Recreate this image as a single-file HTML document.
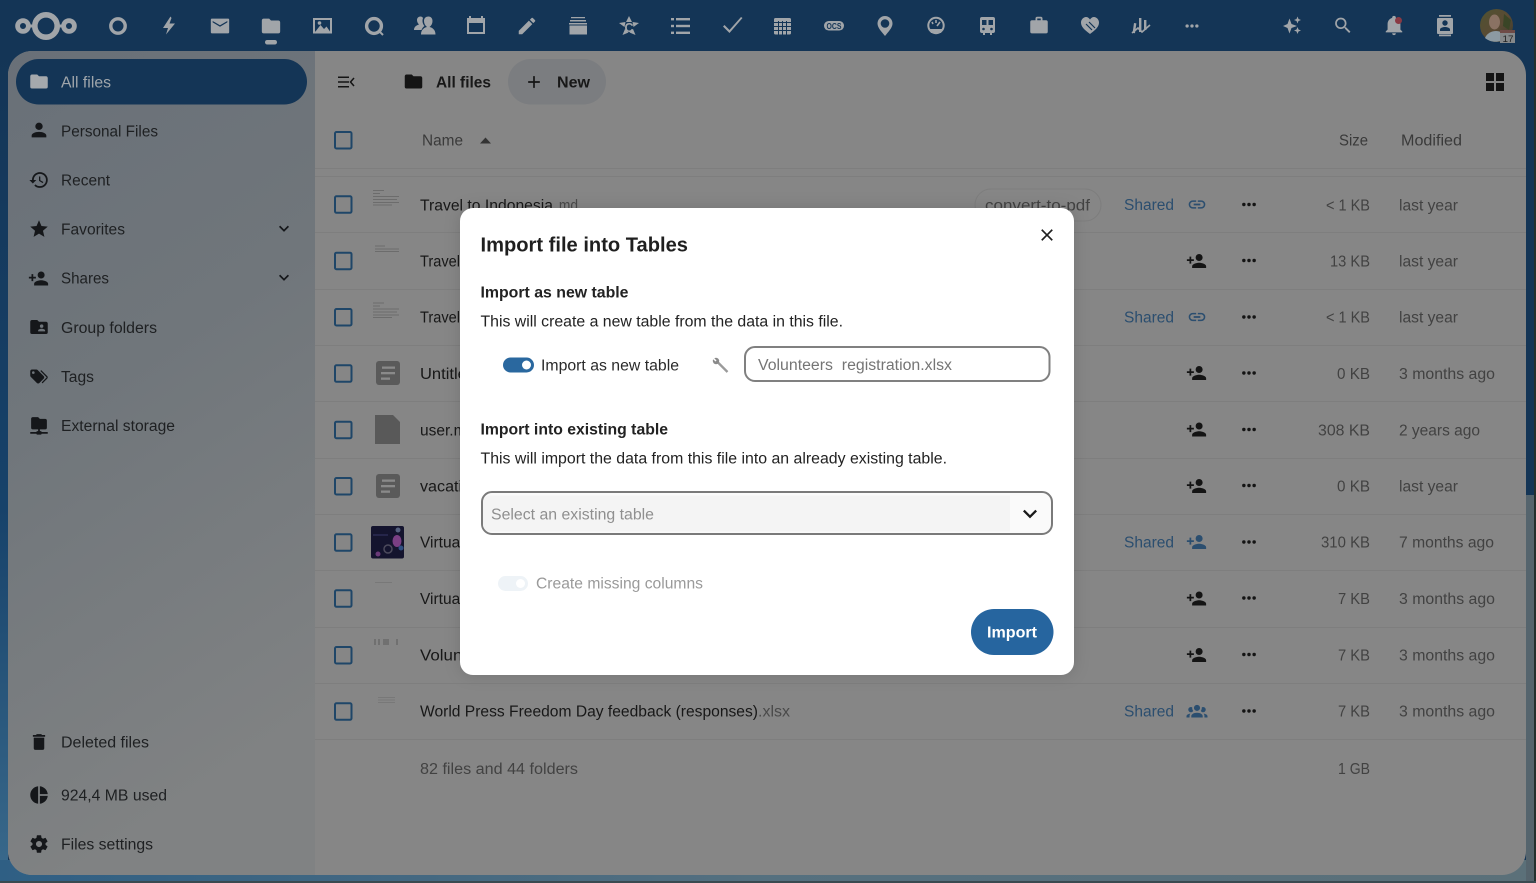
<!DOCTYPE html>
<html lang="en"><head><meta charset="utf-8"><title>Files</title>
<style>
html,body{margin:0;padding:0;width:1536px;height:883px;overflow:hidden;background:#143556}
svg{display:block}
text{font-family:"Liberation Sans",sans-serif;font-size:15.5px}
.s{fill:#1e2022}
.d{fill:#181818}
.g{fill:#424242}
.h{fill:#3a3a3a}
.e{fill:#4a4a4a}
.b{fill:#2b4e6f}
.bd{font-weight:bold}
.ck{fill:none;stroke:#1f4668;stroke-width:2}
.l{stroke:#7e7e7e;stroke-width:1}
.ti{fill:#a1a5a9}
</style></head><body>
<svg width="1536" height="883" viewBox="0 0 1536 883" xmlns="http://www.w3.org/2000/svg">
<defs>
<linearGradient id="sb" x1="0" y1="0" x2="0.25" y2="1"><stop offset="0" stop-color="#697078"/><stop offset=".45" stop-color="#70767b"/><stop offset="1" stop-color="#808283"/></linearGradient>
<linearGradient id="lf" x1="0" y1="0" x2="0" y2="1"><stop offset="0" stop-color="#143556"/><stop offset=".55" stop-color="#17426a"/><stop offset="1" stop-color="#3a6a8c"/></linearGradient>
<linearGradient id="bt" x1="0" y1="0" x2="1" y2="0"><stop offset="0" stop-color="#2f5f84"/><stop offset=".5" stop-color="#55707f"/><stop offset="1" stop-color="#5b7079"/></linearGradient>
<linearGradient id="av" x1="0" y1="0" x2="1" y2="1"><stop offset="0" stop-color="#4f5230"/><stop offset=".55" stop-color="#5a4a34"/><stop offset="1" stop-color="#3c3a2c"/></linearGradient>
<filter id="sh" x="-10%" y="-10%" width="120%" height="120%"><feDropShadow dx="0" dy="0" stdDeviation="8" flood-color="#000" flood-opacity=".14"/></filter>
<symbol id="folder" viewBox="0 0 24 24"><path d="M10,4H4C2.89,4 2,4.89 2,6V18A2,2 0 0,0 4,20H20A2,2 0 0,0 22,18V8C22,6.89 21.1,6 20,6H12L10,4Z"/></symbol>
<symbol id="account" viewBox="0 0 24 24"><path d="M12,4A4,4 0 0,1 16,8A4,4 0 0,1 12,12A4,4 0 0,1 8,8A4,4 0 0,1 12,4M12,14C16.42,14 20,15.79 20,18V20H4V18C4,15.79 7.58,14 12,14Z"/></symbol>
<symbol id="history" viewBox="0 0 24 24"><path d="M13.5,8H12V13L16.28,15.54L17,14.33L13.5,12.25V8M13,3A9,9 0 0,0 4,12H1L4.96,16.03L9,12H6A7,7 0 0,1 13,5A7,7 0 0,1 20,12A7,7 0 0,1 13,19C11.07,19 9.32,18.21 8.06,16.94L6.64,18.36C8.27,20 10.5,21 13,21A9,9 0 0,0 22,12A9,9 0 0,0 13,3"/></symbol>
<symbol id="star" viewBox="0 0 24 24"><path d="M12,17.27L18.18,21L16.54,13.97L22,9.24L14.81,8.62L12,2L9.19,8.62L2,9.24L7.45,13.97L5.82,21L12,17.27Z"/></symbol>
<symbol id="acplus" viewBox="0 0 24 24"><path d="M15,14C12.33,14 7,15.33 7,18V20H23V18C23,15.33 17.67,14 15,14M6,10V7H4V10H1V12H4V15H6V12H9V10M15,12A4,4 0 0,0 19,8A4,4 0 0,0 15,4A4,4 0 0,0 11,8A4,4 0 0,0 15,12Z"/></symbol>
<symbol id="fgroup" viewBox="0 0 24 24"><path fill-rule="evenodd" d="M20,6H12L10,4H4C2.89,4 2,4.89 2,6V18A2,2 0 0,0 4,20H20A2,2 0 0,0 22,18V8C22,6.89 21.1,6 20,6ZM19,17H11V16C11,14.67 13.67,14 15,14C16.33,14 19,14.67 19,16ZM15,9A2,2 0 0,1 17,11A2,2 0 0,1 15,13A2,2 0 0,1 13,11A2,2 0 0,1 15,9Z"/></symbol>
<symbol id="tags" viewBox="0 0 24 24"><path d="M5.5,9A1.5,1.5 0 0,0 7,7.5A1.5,1.5 0 0,0 5.5,6A1.5,1.5 0 0,0 4,7.5A1.5,1.5 0 0,0 5.5,9M17.41,11.58C17.77,11.94 18,12.44 18,13C18,13.55 17.78,14.05 17.41,14.41L12.41,19.41C12.05,19.77 11.55,20 11,20C10.45,20 9.95,19.78 9.58,19.41L2.59,12.42C2.22,12.05 2,11.55 2,11V6C2,4.89 2.89,4 4,4H9C9.55,4 10.05,4.22 10.41,4.58L17.41,11.58M13.54,5.71L14.54,4.71L21.41,11.58C21.78,11.94 22,12.45 22,13C22,13.55 21.78,14.05 21.42,14.41L16.04,19.79L15.04,18.79L20.75,13L13.54,5.71Z"/></symbol>
<symbol id="fnet" viewBox="0 0 24 24"><path d="M3,15V5A2,2 0 0,1 5,3H11L13,5H19A2,2 0 0,1 21,7V15A2,2 0 0,1 19,17H13V19H14A1,1 0 0,1 15,20H22V22H15A1,1 0 0,1 14,23H10A1,1 0 0,1 9,22H2V20H9A1,1 0 0,1 10,19H11V17H5A2,2 0 0,1 3,15Z"/></symbol>
<symbol id="trash" viewBox="0 0 24 24"><path d="M19,4H15.5L14.5,3H9.5L8.5,4H5V6H19M6,19A2,2 0 0,0 8,21H16A2,2 0 0,0 18,19V7H6V19Z"/></symbol>
<symbol id="pie" viewBox="0 0 24 24"><path d="M11,2V22C5.9,21.5 2,17.2 2,12C2,6.8 5.9,2.5 11,2M13,2V11H22C21.5,6.2 17.8,2.5 13,2M13,13V22C17.7,21.5 21.5,17.8 22,13H13Z"/></symbol>
<symbol id="cog" viewBox="0 0 24 24"><path d="M12,15.5A3.5,3.5 0 0,1 8.5,12A3.5,3.5 0 0,1 12,8.5A3.5,3.5 0 0,1 15.5,12A3.5,3.5 0 0,1 12,15.5M19.43,12.97C19.47,12.65 19.5,12.33 19.5,12C19.5,11.67 19.47,11.34 19.43,11L21.54,9.37C21.73,9.22 21.78,8.95 21.66,8.73L19.66,5.27C19.54,5.05 19.27,4.96 19.05,5.05L16.56,6.05C16.04,5.66 15.5,5.32 14.87,5.07L14.5,2.42C14.46,2.18 14.25,2 14,2H10C9.75,2 9.54,2.18 9.5,2.42L9.13,5.07C8.5,5.32 7.96,5.66 7.44,6.05L4.95,5.05C4.73,4.96 4.46,5.05 4.34,5.27L2.34,8.73C2.21,8.95 2.27,9.22 2.46,9.37L4.57,11C4.53,11.34 4.5,11.67 4.5,12C4.5,12.33 4.53,12.65 4.57,12.97L2.46,14.63C2.27,14.78 2.21,15.05 2.34,15.27L4.34,18.73C4.46,18.95 4.73,19.03 4.95,18.95L7.44,17.94C7.96,18.34 8.5,18.68 9.13,18.93L9.5,21.58C9.54,21.82 9.75,22 10,22H14C14.25,22 14.46,21.82 14.5,21.58L14.87,18.93C15.5,18.67 16.04,18.34 16.56,17.94L19.05,18.95C19.27,19.03 19.54,18.95 19.66,18.73L21.66,15.27C21.78,15.05 21.73,14.78 21.54,14.63L19.43,12.97Z"/></symbol>
<symbol id="chev" viewBox="0 0 24 24"><path d="M7.41,8.58L12,13.17L16.59,8.58L18,10L12,16L6,10L7.41,8.58Z"/></symbol>
<symbol id="link" viewBox="0 0 24 24"><path d="M3.9,12C3.9,10.29 5.29,8.9 7,8.9H11V7H7A5,5 0 0,0 2,12A5,5 0 0,0 7,17H11V15.1H7C5.29,15.1 3.9,13.71 3.9,12M8,13H16V11H8V13M17,7H13V8.9H17C18.71,8.9 20.1,10.29 20.1,12C20.1,13.71 18.71,15.1 17,15.1H13V17H17A5,5 0 0,0 22,12A5,5 0 0,0 17,7Z"/></symbol>
<symbol id="group" viewBox="0 0 24 24"><path d="M12,5.5A3.5,3.5 0 0,1 15.5,9A3.5,3.5 0 0,1 12,12.5A3.5,3.5 0 0,1 8.5,9A3.5,3.5 0 0,1 12,5.5M5,8C5.56,8 6.08,8.15 6.53,8.42C6.38,9.85 6.8,11.27 7.66,12.38C7.16,13.34 6.16,14 5,14A3,3 0 0,1 2,11A3,3 0 0,1 5,8M19,8A3,3 0 0,1 22,11A3,3 0 0,1 19,14C17.84,14 16.84,13.34 16.34,12.38C17.2,11.27 17.62,9.85 17.47,8.42C17.92,8.15 18.44,8 19,8M5.5,18.25C5.5,16.18 8.41,14.5 12,14.5C15.59,14.5 18.5,16.18 18.5,18.25V20H5.5V18.25M0,20V18.5C0,17.11 1.89,15.94 4.45,15.6C3.86,16.28 3.5,17.22 3.5,18.25V20H0M24,20H20.5V18.25C20.5,17.22 20.14,16.28 19.55,15.6C22.11,15.94 24,17.11 24,18.5V20Z"/></symbol>
<symbol id="dots" viewBox="0 0 24 24"><circle cx="5.5" cy="12" r="2.2"/><circle cx="12" cy="12" r="2.2"/><circle cx="18.5" cy="12" r="2.2"/></symbol>
<symbol id="mag" viewBox="0 0 24 24"><path d="M9.5,3A6.5,6.5 0 0,1 16,9.5C16,11.11 15.41,12.59 14.44,13.73L14.71,14H15.5L20.5,19L19,20.5L14,15.5V14.71L13.73,14.44C12.59,15.41 11.11,16 9.5,16A6.5,6.5 0 0,1 3,9.5A6.5,6.5 0 0,1 9.5,3M9.5,5C7,5 5,7 5,9.5C5,12 7,14 9.5,14C12,14 14,12 14,9.5C14,7 12,5 9.5,5Z"/></symbol>
<symbol id="bell" viewBox="0 0 24 24"><path d="M21,19V20H3V19L5,17V11C5,7.9 7.03,5.17 10,4.29C10,4.19 10,4.1 10,4A2,2 0 0,1 12,2A2,2 0 0,1 14,4C14,4.1 14,4.19 14,4.29C16.97,5.17 19,7.9 19,11V17L21,19M14,21A2,2 0 0,1 12,23A2,2 0 0,1 10,21"/></symbol>
<symbol id="x" viewBox="0 0 24 24"><path d="M19,6.41L17.59,5L12,10.59L6.41,5L5,6.41L10.59,12L5,17.59L6.41,19L12,13.41L17.59,19L19,17.59L13.41,12L19,6.41Z"/></symbol>
<symbol id="gridv" viewBox="0 0 24 24"><path d="M3,11H11V3H3M3,21H11V13H3M13,21H21V13H13M13,3V11H21V3"/></symbol>
<symbol id="plus" viewBox="0 0 24 24"><path d="M19,13H13V19H11V13H5V11H11V5H13V11H19V13Z"/></symbol>
<symbol id="mail" viewBox="0 0 24 24"><path fill-rule="evenodd" d="M2,5A1,1 0 0,1 3,4H21A1,1 0 0,1 22,5V19A1,1 0 0,1 21,20H3A1,1 0 0,1 2,19ZM4,6.5V8L12,12.8L20,8V6.5L12,11.2Z"/></symbol>
<symbol id="pencil" viewBox="0 0 24 24"><path d="M20.71,7.04C21.1,6.65 21.1,6 20.71,5.63L18.37,3.29C18,2.9 17.35,2.9 16.96,3.29L15.12,5.12L18.87,8.87M3,17.25V21H6.75L17.81,9.93L14.06,6.18L3,17.25Z"/></symbol>
<symbol id="case" viewBox="0 0 24 24"><path d="M10,2H14A2,2 0 0,1 16,4V6H20A2,2 0 0,1 22,8V19A2,2 0 0,1 20,21H4A2,2 0 0,1 2,19V8A2,2 0 0,1 4,6H8V4A2,2 0 0,1 10,2M14,6V4H10V6H14Z"/></symbol>
</defs>

<!-- backdrop edges -->
<rect width="1536" height="883" fill="#143556"/>
<rect x="0" y="51" width="8" height="832" fill="url(#lf)"/>
<rect x="0" y="860" width="1536" height="23" fill="url(#bt)"/>
<rect x="1526" y="495" width="8" height="388" fill="#55646d"/>
<rect x="1534" y="0" width="2" height="883" fill="#24302e"/>
<rect x="0" y="881" width="1536" height="2" fill="#3a4a50"/>

<!-- main frame -->
<rect x="8" y="51" width="1518" height="824" rx="24" fill="#868686"/>
<path d="M32,51H315V875H32A24,24 0 0,1 8,851V75A24,24 0 0,1 32,51Z" fill="url(#sb)"/>

<!-- top bar icons -->
<g class="ti">
<g fill="none" stroke="#a1a5a9">
<circle cx="23" cy="26" r="5.400" stroke-width="4.800"/>
<circle cx="46" cy="26" r="11.200" stroke-width="5.600"/>
<circle cx="69" cy="26" r="5.400" stroke-width="4.800"/>
<path d="M28,26H33M59,26H64" stroke-width="3"/>
<circle cx="118" cy="26" r="7.200" stroke-width="3.400"/>
<circle cx="374" cy="26" r="7.400" stroke-width="3.400"/>
<path d="M379,31L383,35" stroke-width="2"/>
</g>
<path d="M170.500,16.500L163,28H168L166,34.500L175,23.500H169.500L171.500,18Z"/>
<use href="#mail" x="209" y="15" width="22" height="22"/>
<use href="#folder" x="260" y="15" width="22" height="22"/>
<rect x="265" y="40" width="12" height="4.500" rx="2.200"/>
<path fill-rule="evenodd" d="M313,18H332V33.500H313ZM315,20V31.500H330V20Z"/>
<path d="M315.500,31.500L320.500,25L324,29L326.500,26.500L330,31.500Z"/>
<circle cx="319.500" cy="23" r="1.800"/>
<path d="M435.500,34.500C435.500,29.500 432,27.500 429.500,27C431.500,25.500 432.500,23.500 432.500,21C432.500,18 430.500,16.500 428.500,16.500C426,16.500 424,18 424,21C424,23.500 425,25.500 427,27C424.500,27.500 421,29.500 421,34.500Z"/>
<path d="M421.500,30C419,30 414,30 414,30C414,27 416,25.500 419,24.500C417.500,23 417,21.500 417,20C417,18 418.500,16.500 420.500,16.500C421.500,16.500 422.500,17 423,18C422,20.500 422.500,24 424.500,26C423,27 422,28.500 421.500,30Z"/>
<path fill-rule="evenodd" d="M469,16H471V18H481V16H483V18H485V34H467V18H469ZM469,23V32H483V23Z"/>
<use href="#pencil" x="516" y="15" width="22" height="22"/>
<path d="M571,17H585V18.300H571ZM570,20H586V21.500H570ZM569,23H587V24.500H569ZM569.500,25.500H587V34.500H569.500Z"/>
<path d="M629,16L632,22H626ZM639,23L633.500,27L632.500,22ZM619,23L625.500,22L624.500,27ZM622.500,35L625,29L628.500,32.500ZM635.500,35L633,29L629.500,32.500Z"/>
<text x="624.500" y="32" class="bd" style="font-size:12.500px" fill="#a1a5a9">C</text>
<rect x="671" y="18" width="3" height="2.400"/><rect x="676" y="18" width="14" height="2.400"/>
<rect x="671" y="24.800" width="3" height="2.400"/><rect x="676" y="24.800" width="14" height="2.400"/>
<rect x="671" y="31.600" width="3" height="2.400"/><rect x="676" y="31.600" width="14" height="2.400"/>
<path d="M723,26.500L724.500,25L729.500,30L741,17L742.500,18L729.500,33Z"/>
<rect x="774" y="18" width="17" height="16.500" rx="1.500"/>
<path d="M774,22.500H791M774,26.500H791M774,30.500H791M778.500,21V34.500M782.500,21V34.500M786.500,21V34.500" stroke="#143556" stroke-width="1" fill="none"/>
<rect x="824" y="21" width="20" height="9.500" rx="4.700"/>
<text x="826.500" y="29" style="font-size:8px;font-weight:bold" fill="#143556" textLength="15" lengthAdjust="spacingAndGlyphs">OCS</text>
<path d="M885,16A7.500,7.500 0 0,1 892.500,23.500C892.500,28 888,32 885,36C882,32 877.500,28 877.500,23.500A7.500,7.500 0 0,1 885,16Z"/>
<circle cx="885" cy="23.500" r="4.300" fill="#143556"/>
<circle cx="936" cy="25.500" r="7.700" fill="none" stroke="#a1a5a9" stroke-width="2"/>
<path d="M929,29H943L941,33H931Z"/>
<path d="M932,22L933,24M936,20V23M940,22L937,26" stroke="#a1a5a9" stroke-width="1.600" fill="none"/>
<path d="M982,17H993A2,2 0 0,1 995,19V31A2,2 0 0,1 993,33H992V35H990V33H985V35H983V33H982A2,2 0 0,1 980,31V19A2,2 0 0,1 982,17Z"/>
<path d="M982,20H986.500V25H982ZM988.500,20H993V25H988.500Z" fill="#143556"/>
<circle cx="983.500" cy="29" r="1.300" fill="#143556"/><circle cx="991.500" cy="29" r="1.300" fill="#143556"/>
<use href="#case" x="1028.500" y="15" width="21" height="21"/>
<path d="M1090,34C1084,29.500 1081,26.500 1081,22.500C1081,19.500 1083.500,17 1086,17C1087.800,17 1089,18 1090,19.500C1091,18 1092.200,17 1094,17C1096.500,17 1099,19.500 1099,22.500C1099,26.500 1096,29.500 1090,34Z"/>
<path d="M1086,24L1092,30M1089,22L1095,28" stroke="#143556" stroke-width="1.200" fill="none"/>
<rect x="1134" y="23" width="2.400" height="10" transform="rotate(8 1134 23)"/>
<rect x="1139" y="18" width="2.400" height="14"/>
<rect x="1144" y="20" width="2.400" height="10"/>
<path d="M1132,33L1138,28L1142,32L1150,25" stroke="#a1a5a9" stroke-width="1.700" fill="none"/>
<use href="#dots" x="1183" y="17" width="18" height="18"/>
<path d="M1289.500,18.500L1291.500,24L1297,26L1291.500,28L1289.500,33.500L1287.500,28L1283,26L1287.500,24ZM1297.500,16.500L1298.500,19L1301,20L1298.500,21L1297.500,23.500L1296.500,21L1294,20L1296.500,19ZM1297.500,27L1298.500,29.500L1301,30.500L1298.500,31.500L1297.500,34L1296.500,31.500L1294,30.500L1296.500,29.500Z"/>
<use href="#mag" x="1332.500" y="15" width="21" height="21"/>
<use href="#bell" x="1383" y="14" width="22" height="22"/>
<circle cx="1398.500" cy="20.500" r="3.500" fill="#8a3a44"/>
<path d="M1439,15H1451V16.800H1439ZM1438,18H1452A1,1 0 0,1 1453,19V33A1,1 0 0,1 1452,34H1438A1,1 0 0,1 1437,33V19A1,1 0 0,1 1438,18ZM1439,34.500H1451V36.300H1439Z"/>
<circle cx="1445" cy="23" r="2.700" fill="#143556"/>
<path d="M1440,31H1450V29.500C1450,27.800 1447,27 1445,27C1443,27 1440,27.800 1440,29.500Z" fill="#143556"/>
</g>
<!-- avatar -->
<circle cx="1496.500" cy="25.500" r="16.500" fill="url(#av)"/>
<ellipse cx="1494.500" cy="22" rx="5.500" ry="7.500" fill="#8a7263"/>
<path d="M1485,38C1487,33 1492,31 1496,31C1500,31 1504,33 1506,38C1500,43 1491,43 1485,38Z" fill="#8c9aa2"/>
<path d="M1504,14L1511,20L1509,30L1503,26Z" fill="#3a4526"/>
<rect x="1500" y="33" width="15" height="10" fill="#85888a"/>
<rect x="1500" y="30" width="15" height="3" fill="#6e4a46"/>
<text x="1502.500" y="42" style="font-size:9.500px" fill="#222" textLength="11" lengthAdjust="spacingAndGlyphs">17</text>

<!-- sidebar -->
<rect x="16" y="59" width="291" height="45.500" rx="22.700" fill="#143556"/>
<use href="#folder" x="28.500" y="71" width="21" height="21" fill="#a5a9ad"/>
<text x="61" y="87.500" fill="#a0a6ab" textLength="50" lengthAdjust="spacingAndGlyphs">All files</text>
<g fill="#15171a">
<use href="#account" x="28" y="119" width="22" height="22"/>
<use href="#history" x="28.500" y="169.500" width="21" height="21"/>
<use href="#star" x="28.500" y="218.500" width="21" height="21"/>
<use href="#acplus" x="28" y="268" width="21" height="21"/>
<use href="#fgroup" x="28.500" y="316.500" width="21" height="21"/>
<use href="#tags" x="28.500" y="366" width="21" height="21"/>
<use href="#fnet" x="28.500" y="414.500" width="21" height="21"/>
<use href="#trash" x="28.500" y="731.500" width="21" height="21"/>
<use href="#pie" x="28.500" y="784.500" width="21" height="21"/>
<use href="#cog" x="28.500" y="833.500" width="21" height="21"/>
<use href="#chev" x="274" y="218.500" width="20" height="20"/>
<use href="#chev" x="274" y="267.500" width="20" height="20"/>
</g>
<g class="s">
<text x="61" y="136.500" textLength="97" lengthAdjust="spacingAndGlyphs">Personal Files</text>
<text x="61" y="185.500" textLength="49" lengthAdjust="spacingAndGlyphs">Recent</text>
<text x="61" y="234.500" textLength="64" lengthAdjust="spacingAndGlyphs">Favorites</text>
<text x="61" y="283.500" textLength="48" lengthAdjust="spacingAndGlyphs">Shares</text>
<text x="61" y="333" textLength="96" lengthAdjust="spacingAndGlyphs">Group folders</text>
<text x="61" y="382" textLength="33" lengthAdjust="spacingAndGlyphs">Tags</text>
<text x="61" y="431" textLength="114" lengthAdjust="spacingAndGlyphs">External storage</text>
<text x="61" y="747.500" textLength="88" lengthAdjust="spacingAndGlyphs">Deleted files</text>
<text x="61" y="800.500" textLength="106" lengthAdjust="spacingAndGlyphs">924,4 MB used</text>
<text x="61" y="849.500" textLength="92" lengthAdjust="spacingAndGlyphs">Files settings</text>
</g>

<!-- header -->
<g fill="#141414">
<path d="M338,76.500H349V78H338ZM338,81.200H349V82.700H338ZM338,86H349V87.500H338Z"/>
<path d="M354,78L350.500,82L354,86" fill="none" stroke="#141414" stroke-width="1.500"/>
<use href="#folder" x="403" y="71" width="21" height="21"/>
<use href="#gridv" x="1483" y="70" width="24" height="24"/>
</g>
<text x="436" y="87.500" class="d bd" textLength="55" lengthAdjust="spacingAndGlyphs">All files</text>
<rect x="508" y="59" width="98" height="45.500" rx="22.700" fill="#7b7d80"/>
<use href="#plus" x="524" y="72" width="20" height="20" fill="#141414"/>
<text x="557" y="87.500" class="d bd" textLength="33" lengthAdjust="spacingAndGlyphs">New</text>
<rect x="335" y="132" width="16.500" height="16.500" rx="1.500" class="ck"/>
<text x="422" y="145.500" class="h" textLength="41" lengthAdjust="spacingAndGlyphs">Name</text>
<path d="M480,143.500L485.500,137.500L491,143.500Z" fill="#333"/>
<text x="1339" y="145.500" class="h" textLength="29" lengthAdjust="spacingAndGlyphs">Size</text>
<text x="1401" y="145.500" class="h" textLength="61" lengthAdjust="spacingAndGlyphs">Modified</text>
<line x1="315" x2="1526" y1="168.500" y2="168.500" class="l"/>
<line x1="315" x2="1526" y1="176.500" y2="176.500" class="l"/>

<!-- row lines -->
<g class="l">
<line x1="315" x2="1526" y1="232.500" y2="232.500"/>
<line x1="315" x2="1526" y1="289.500" y2="289.500"/>
<line x1="315" x2="1526" y1="345.500" y2="345.500"/>
<line x1="315" x2="1526" y1="401.500" y2="401.500"/>
<line x1="315" x2="1526" y1="458.500" y2="458.500"/>
<line x1="315" x2="1526" y1="514.500" y2="514.500"/>
<line x1="315" x2="1526" y1="570.500" y2="570.500"/>
<line x1="315" x2="1526" y1="627.500" y2="627.500"/>
<line x1="315" x2="1526" y1="683.500" y2="683.500"/>
<line x1="315" x2="1526" y1="739.500" y2="739.500"/>
</g>

<!-- checkboxes -->
<rect x="335" y="196.300" width="16.500" height="16.500" rx="1.500" class="ck"/>
<rect x="335" y="252.700" width="16.500" height="16.500" rx="1.500" class="ck"/>
<rect x="335" y="309" width="16.500" height="16.500" rx="1.500" class="ck"/>
<rect x="335" y="365.300" width="16.500" height="16.500" rx="1.500" class="ck"/>
<rect x="335" y="421.700" width="16.500" height="16.500" rx="1.500" class="ck"/>
<rect x="335" y="478" width="16.500" height="16.500" rx="1.500" class="ck"/>
<rect x="335" y="534.300" width="16.500" height="16.500" rx="1.500" class="ck"/>
<rect x="335" y="590.300" width="16.500" height="16.500" rx="1.500" class="ck"/>
<rect x="335" y="647" width="16.500" height="16.500" rx="1.500" class="ck"/>
<rect x="335" y="703.300" width="16.500" height="16.500" rx="1.500" class="ck"/>

<!-- thumbnails -->
<g stroke="#6c6c6c" stroke-width="1" fill="none">
<path d="M373,190.500H384M373,193.500H380M373,196.500H399M373,199.500H397M373,202.500H399M373,205H392"/>
<path d="M375,246H385M375,249H399M375,251.500H399"/>
<path d="M373,303H384M373,306H380M373,309H399M373,312H397M373,315H399M373,317.500H392"/>
<path d="M375,582.500H392" stroke="#787878"/>
<path d="M378,697.500H395M378,700H395M378,702.500H395" stroke="#787878"/>
</g>
<g fill="#707070"><rect x="374" y="639" width="2" height="6"/><rect x="378" y="639" width="2" height="6"/><rect x="383" y="639" width="6" height="6"/><rect x="396" y="639" width="2" height="6"/></g>
<rect x="376" y="361" width="24" height="24" rx="3" fill="#5a5a5a"/>
<g fill="#8a8a8a"><rect x="382" y="366.500" width="13" height="2.300"/><rect x="381" y="372" width="14" height="2.300"/><rect x="381" y="377.500" width="9" height="2.300"/></g>
<path d="M375,415H393L400,422V444H375Z" fill="#595959"/>
<rect x="376" y="474" width="24" height="24" rx="3" fill="#5a5a5a"/>
<g fill="#8a8a8a"><rect x="382" y="479.500" width="13" height="2.300"/><rect x="381" y="485" width="14" height="2.300"/><rect x="381" y="490.500" width="9" height="2.300"/></g>
<rect x="371" y="526" width="33" height="32.500" rx="2" fill="#14142e"/>
<ellipse cx="397" cy="541" rx="4.500" ry="6" fill="#7a3f84"/>
<circle cx="388" cy="549" r="4" fill="none" stroke="#4c4a5c" stroke-width="1.500"/>
<circle cx="378" cy="554" r="2.500" fill="#6a3a78"/>
<circle cx="401" cy="548" r="2.500" fill="#2f4f82"/>
<circle cx="398" cy="530" r="2.500" fill="#55607f"/>
<path d="M373,535H388" stroke="#25254a" stroke-width="2"/>

<!-- file names -->
<g class="d">
<text x="420" y="210.500" textLength="133" lengthAdjust="spacingAndGlyphs">Travel to Indonesia</text>
<text x="420" y="266.500" textLength="40" lengthAdjust="spacingAndGlyphs">Travel</text>
<text x="420" y="322.500" textLength="40" lengthAdjust="spacingAndGlyphs">Travel</text>
<text x="420" y="379" textLength="56" lengthAdjust="spacingAndGlyphs">Untitled</text>
<text x="420" y="435.500">user.md</text>
<text x="420" y="491.500" textLength="60" lengthAdjust="spacingAndGlyphs">vacation</text>
<text x="420" y="547.500">Virtual</text>
<text x="420" y="604">Virtual</text>
<text x="420" y="660.500" textLength="80" lengthAdjust="spacingAndGlyphs">Volunteers</text>
<text x="420" y="716.500" textLength="338" lengthAdjust="spacingAndGlyphs">World Press Freedom Day feedback (responses)</text>
</g>
<text x="555" y="210.500" class="e" textLength="23" lengthAdjust="spacingAndGlyphs">.md</text>
<text x="758" y="716.500" class="e" textLength="32" lengthAdjust="spacingAndGlyphs">.xlsx</text>
<text x="420" y="774" class="g" textLength="158" lengthAdjust="spacingAndGlyphs">82 files and 44 folders</text>

<!-- tag -->
<rect x="975" y="189" width="126" height="32" rx="16" fill="#868686" stroke="#7d7d7d"/>
<text x="985" y="210.500" class="g" textLength="105" lengthAdjust="spacingAndGlyphs">convert-to-pdf</text>

<!-- shared -->
<g class="b">
<text x="1124" y="210" textLength="50" lengthAdjust="spacingAndGlyphs">Shared</text>
<text x="1124" y="322.500" textLength="50" lengthAdjust="spacingAndGlyphs">Shared</text>
<text x="1124" y="547.500" textLength="50" lengthAdjust="spacingAndGlyphs">Shared</text>
<text x="1124" y="716.500" textLength="50" lengthAdjust="spacingAndGlyphs">Shared</text>
<use href="#link" x="1187" y="194.500" width="20" height="20"/>
<use href="#link" x="1187" y="307" width="20" height="20"/>
<use href="#acplus" x="1186" y="531.500" width="21" height="21"/>
<use href="#group" x="1186.500" y="700" width="21" height="21"/>
</g>
<g fill="#141414">
<use href="#acplus" x="1186" y="250.500" width="21" height="21"/>
<use href="#acplus" x="1186" y="362.500" width="21" height="21"/>
<use href="#acplus" x="1186" y="419" width="21" height="21"/>
<use href="#acplus" x="1186" y="475.500" width="21" height="21"/>
<use href="#acplus" x="1186" y="588" width="21" height="21"/>
<use href="#acplus" x="1186" y="644.500" width="21" height="21"/>
<use href="#dots" x="1239.500" y="195" width="19" height="19"/>
<use href="#dots" x="1239.500" y="251" width="19" height="19"/>
<use href="#dots" x="1239.500" y="307.500" width="19" height="19"/>
<use href="#dots" x="1239.500" y="363.500" width="19" height="19"/>
<use href="#dots" x="1239.500" y="420" width="19" height="19"/>
<use href="#dots" x="1239.500" y="476" width="19" height="19"/>
<use href="#dots" x="1239.500" y="532.500" width="19" height="19"/>
<use href="#dots" x="1239.500" y="588.500" width="19" height="19"/>
<use href="#dots" x="1239.500" y="645" width="19" height="19"/>
<use href="#dots" x="1239.500" y="701.500" width="19" height="19"/>
</g>

<!-- sizes -->
<g class="g">
<text x="1326" y="210.500" textLength="44" lengthAdjust="spacingAndGlyphs">&lt; 1 KB</text>
<text x="1330" y="266.500" textLength="40" lengthAdjust="spacingAndGlyphs">13 KB</text>
<text x="1326" y="322.500" textLength="44" lengthAdjust="spacingAndGlyphs">&lt; 1 KB</text>
<text x="1337" y="379" textLength="33" lengthAdjust="spacingAndGlyphs">0 KB</text>
<text x="1318" y="435.500" textLength="52" lengthAdjust="spacingAndGlyphs">308 KB</text>
<text x="1337" y="491.500" textLength="33" lengthAdjust="spacingAndGlyphs">0 KB</text>
<text x="1321" y="547.500" textLength="49" lengthAdjust="spacingAndGlyphs">310 KB</text>
<text x="1338" y="604" textLength="32" lengthAdjust="spacingAndGlyphs">7 KB</text>
<text x="1338" y="660.500" textLength="32" lengthAdjust="spacingAndGlyphs">7 KB</text>
<text x="1338" y="716.500" textLength="32" lengthAdjust="spacingAndGlyphs">7 KB</text>
<text x="1338" y="774" textLength="32" lengthAdjust="spacingAndGlyphs">1 GB</text>
<text x="1399" y="210.500" textLength="59" lengthAdjust="spacingAndGlyphs">last year</text>
<text x="1399" y="266.500" textLength="59" lengthAdjust="spacingAndGlyphs">last year</text>
<text x="1399" y="322.500" textLength="59" lengthAdjust="spacingAndGlyphs">last year</text>
<text x="1399" y="379" textLength="96" lengthAdjust="spacingAndGlyphs">3 months ago</text>
<text x="1399" y="435.500" textLength="81" lengthAdjust="spacingAndGlyphs">2 years ago</text>
<text x="1399" y="491.500" textLength="59" lengthAdjust="spacingAndGlyphs">last year</text>
<text x="1399" y="547.500" textLength="95" lengthAdjust="spacingAndGlyphs">7 months ago</text>
<text x="1399" y="604" textLength="96" lengthAdjust="spacingAndGlyphs">3 months ago</text>
<text x="1399" y="660.500" textLength="96" lengthAdjust="spacingAndGlyphs">3 months ago</text>
<text x="1399" y="716.500" textLength="96" lengthAdjust="spacingAndGlyphs">3 months ago</text>
</g>

<!-- modal -->
<rect x="460" y="208" width="614" height="467" rx="13" fill="#fff" filter="url(#sh)"/>
<text x="480.500" y="251.500" class="bd" fill="#1f1f1f" style="font-size:20px" textLength="207.500" lengthAdjust="spacingAndGlyphs">Import file into Tables</text>
<use href="#x" x="1037" y="225" width="20" height="20" fill="#1f1f1f"/>
<text x="480.500" y="297.500" class="bd" fill="#222" textLength="148" lengthAdjust="spacingAndGlyphs">Import as new table</text>
<text x="480.500" y="326.500" fill="#222" textLength="362.500" lengthAdjust="spacingAndGlyphs">This will create a new table from the data in this file.</text>
<rect x="503" y="357.500" width="31" height="15" rx="7.500" fill="#2a689f"/>
<circle cx="526.500" cy="365" r="4.500" fill="#fff"/>
<text x="541" y="370.500" fill="#2a2a2a" textLength="138" lengthAdjust="spacingAndGlyphs">Import as new table</text>
<path d="M718,362.500L727.500,372" stroke="#9a9a9a" stroke-width="2.300" fill="none"/>
<circle cx="716" cy="361" r="3.200" fill="#8a8a8a"/>
<path d="M713,358L716,361" stroke="#fff" stroke-width="1.500" fill="none"/>
<rect x="745" y="347" width="304.500" height="34" rx="10" fill="#fff" stroke="#808080" stroke-width="2"/>
<text x="758" y="370" fill="#757575" xml:space="preserve" textLength="194" lengthAdjust="spacingAndGlyphs">Volunteers  registration.xlsx</text>
<text x="480.500" y="434.500" class="bd" fill="#222" textLength="187.500" lengthAdjust="spacingAndGlyphs">Import into existing table</text>
<text x="480.500" y="463.500" fill="#222" textLength="466.500" lengthAdjust="spacingAndGlyphs">This will import the data from this file into an already existing table.</text>
<rect x="482" y="492" width="570" height="42" rx="10" fill="#fafafa" stroke="#7a7a7a" stroke-width="2"/>
<path d="M490,495.500H1010V531.500H490A7,7 0 0,1 483,524.500V502.500A7,7 0 0,1 490,495.500Z" fill="#f4f4f4"/>
<text x="491" y="519.500" fill="#8f8f8f" textLength="163" lengthAdjust="spacingAndGlyphs">Select an existing table</text>
<use href="#chev" x="1016" y="499.700" width="28" height="28" fill="#1a1a1a"/>
<rect x="498" y="576" width="30" height="15" rx="7.500" fill="#eef3f7"/>
<circle cx="520.500" cy="583.500" r="4.500" fill="#fff"/>
<text x="536" y="588.500" fill="#9a9a9a" textLength="167" lengthAdjust="spacingAndGlyphs">Create missing columns</text>
<rect x="971" y="609" width="82.500" height="46" rx="23" fill="#26659f"/>
<text x="987" y="637.500" class="bd" fill="#fff" textLength="50" lengthAdjust="spacingAndGlyphs">Import</text>
</svg>
</body></html>
